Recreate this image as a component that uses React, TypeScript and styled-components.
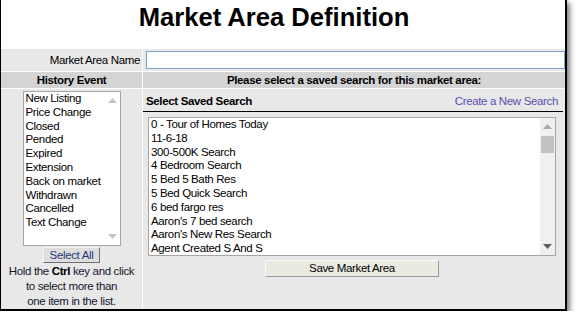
import React from 'react'
import styled, { createGlobalStyle } from 'styled-components'

const GlobalStyle = createGlobalStyle`
    html, body {
        margin: 0;
        padding: 0;
        background: #fff;
    }
    body {
        font-family: 'Liberation Sans', Arial, sans-serif;
        font-size: 11.5px;
        letter-spacing: -0.35px;
        color: #000;
    }
    button, input {
        font-family: 'Liberation Sans', Arial, sans-serif;
        font-size: 11.5px;
        letter-spacing: -0.35px;
    }
`

const historyEvents = [
    'New Listing',
    'Price Change',
    'Closed',
    'Pended',
    'Expired',
    'Extension',
    'Back on market',
    'Withdrawn',
    'Cancelled',
    'Text Change',
]

const savedSearches = [
    '0 - Tour of Homes Today',
    '11-6-18',
    '300-500K Search',
    '4 Bedroom Search',
    '5 Bed 5 Bath Res',
    '5 Bed Quick Search',
    '6 bed fargo res',
    "Aaron's 7 bed search",
    "Aaron's New Res Search",
    'Agent Created S And S',
]

const Arrow = ({ down, tone }: { down?: boolean; tone: string }) => (
    <svg width="9" height="5" viewBox="0 0 9 5">
        <path d={down ? 'M0 0 L9 0 L4.5 5 Z' : 'M0 5 L9 5 L4.5 0 Z'} fill={tone} />
    </svg>
)

interface ListBoxProps {
    items: string[]
    width: number
    height: number
    showThumb?: boolean
}
const ListBox = (props: ListBoxProps): JSX.Element => {
    const { items, width, height, showThumb } = props
    return (
        <Box style={{ width, height }}>
            <Options>
                {items.map((item) => (
                    <Option key={item}>{item}</Option>
                ))}
            </Options>
            <Rail filled={!!showThumb}>
                <ArrowSlot>
                    <Arrow tone={showThumb ? '#a8a8a8' : '#c4c4c4'} />
                </ArrowSlot>
                <Track>{showThumb && <Thumb />}</Track>
                <ArrowSlot>
                    <Arrow down tone={showThumb ? '#606060' : '#c4c4c4'} />
                </ArrowSlot>
            </Rail>
        </Box>
    )
}

export default function App(): JSX.Element {
    return (
        <>
            <GlobalStyle />
            <Frame>
                <Title>Market Area Definition</Title>
                <Grid>
                    <LabelCell>Market Area Name</LabelCell>
                    <InputCell>
                        <NameInput autoFocus defaultValue="" />
                    </InputCell>
                    <HeadCell>History Event</HeadCell>
                    <HeadCell>Please select a saved search for this market area:</HeadCell>
                    <LeftBody>
                        <ListBox items={historyEvents} width={98} height={155} />
                        <SelectAllButton>Select All</SelectAllButton>
                        <Hint>
                            Hold the <b>Ctrl</b> key and click
                            <br />
                            to select more than
                            <br />
                            one item in the list.
                        </Hint>
                    </LeftBody>
                    <RightBody>
                        <SearchBar>
                            <SearchLabel>Select Saved Search</SearchLabel>
                            <CreateLink href="#">Create a New Search</CreateLink>
                        </SearchBar>
                        <SearchColumn>
                            <ListBox items={savedSearches} width={408} height={139} showThumb />
                            <SaveButton>Save Market Area</SaveButton>
                        </SearchColumn>
                    </RightBody>
                </Grid>
            </Frame>
        </>
    )
}

const Frame = styled.div`
    width: 564px;
    background: #fff;
    border: 1px solid #000;
    border-top: none;
    border-right-width: 2px;
    border-bottom-width: 2px;
    box-shadow: 3px 3px 5px rgba(0, 0, 0, 0.5);
`

const Title = styled.h1`
    margin: 0;
    height: 49px;
    padding: 2px 18px 0 0;
    box-sizing: border-box;
    text-align: center;
    font-size: 25.6px;
    letter-spacing: 0;
    line-height: 30px;
    font-weight: bold;
`

const Grid = styled.div`
    display: grid;
    grid-template-columns: 141px 1fr;
    grid-template-rows: 22px 16px 220px;
    gap: 1px;
`

const LabelCell = styled.div`
    background: #e8e8e8;
    display: flex;
    align-items: center;
    justify-content: flex-end;
    padding-right: 2px;
`

const InputCell = styled.div`
    background: #e8e8e8;
    display: flex;
    align-items: center;
    padding: 0 0 0 3px;
`

const NameInput = styled.input`
    width: 100%;
    height: 18px;
    box-sizing: border-box;
    border: 1px solid #7da7d9;
    outline: none;
    padding: 0 2px;
    caret-color: #000;
`

const HeadCell = styled.div`
    background: #d4d4d4;
    text-align: center;
    font-weight: bold;
    line-height: 16px;
`

const LeftBody = styled.div`
    background: #e8e8e8;
    display: flex;
    flex-direction: column;
    align-items: center;
    padding-top: 2px;
`

const RightBody = styled.div`
    background: #e8e8e8;
    display: flex;
    flex-direction: column;
`

const Box = styled.div`
    display: flex;
    box-sizing: border-box;
    background: #fff;
    border: 1px solid #a6a6a6;
`

const Options = styled.div`
    flex: 1;
    min-width: 0;
    padding-left: 2px;
`

const Option = styled.div`
    line-height: 13.8px;
    white-space: nowrap;
`

const Rail = styled.div<{ filled: boolean }>`
    width: 15px;
    display: flex;
    flex-direction: column;
    align-items: center;
    background: ${(p) => (p.filled ? '#f0f0f0' : '#fff')};
`

const ArrowSlot = styled.div`
    height: 17px;
    display: flex;
    align-items: center;
    justify-content: center;
`

const Track = styled.div`
    flex: 1;
    width: 100%;
    padding: 1px 1px 0;
    box-sizing: border-box;
`

const Thumb = styled.div`
    height: 17px;
    background: #c2c2c2;
`

const SelectAllButton = styled.button`
    margin-top: 1px;
    width: 57px;
    height: 16px;
    padding: 0;
    background: #dedede;
    border: 1px solid;
    border-color: #f4f4f4 #6e6e6e #6e6e6e #f4f4f4;
    color: #27367a;
    line-height: 14px;
`

const Hint = styled.div`
    margin-top: 1px;
    text-align: center;
    line-height: 15px;
    color: #15152e;

    b {
        color: #000;
    }
`

const SearchBar = styled.div`
    height: 21px;
    display: flex;
    align-items: center;
    justify-content: space-between;
    padding: 1px 5px 0 3px;
    margin-right: 2px;
    border-bottom: 1px solid #000;
`

const SearchLabel = styled.span`
    font-weight: bold;
`

const CreateLink = styled.a`
    color: #5a50b0;
    text-decoration: none;
`

const SearchColumn = styled.div`
    display: flex;
    flex-direction: column;
    align-items: center;
    width: 408px;
    margin: 5px 0 0 5px;
`

const SaveButton = styled.button`
    margin-top: 4px;
    width: 174px;
    height: 17px;
    padding: 0;
    background: #eaeae2;
    border: 1px solid;
    border-color: #fafafa #9a9a9a #9a9a9a #fafafa;
    color: #000;
    line-height: 15px;
`
